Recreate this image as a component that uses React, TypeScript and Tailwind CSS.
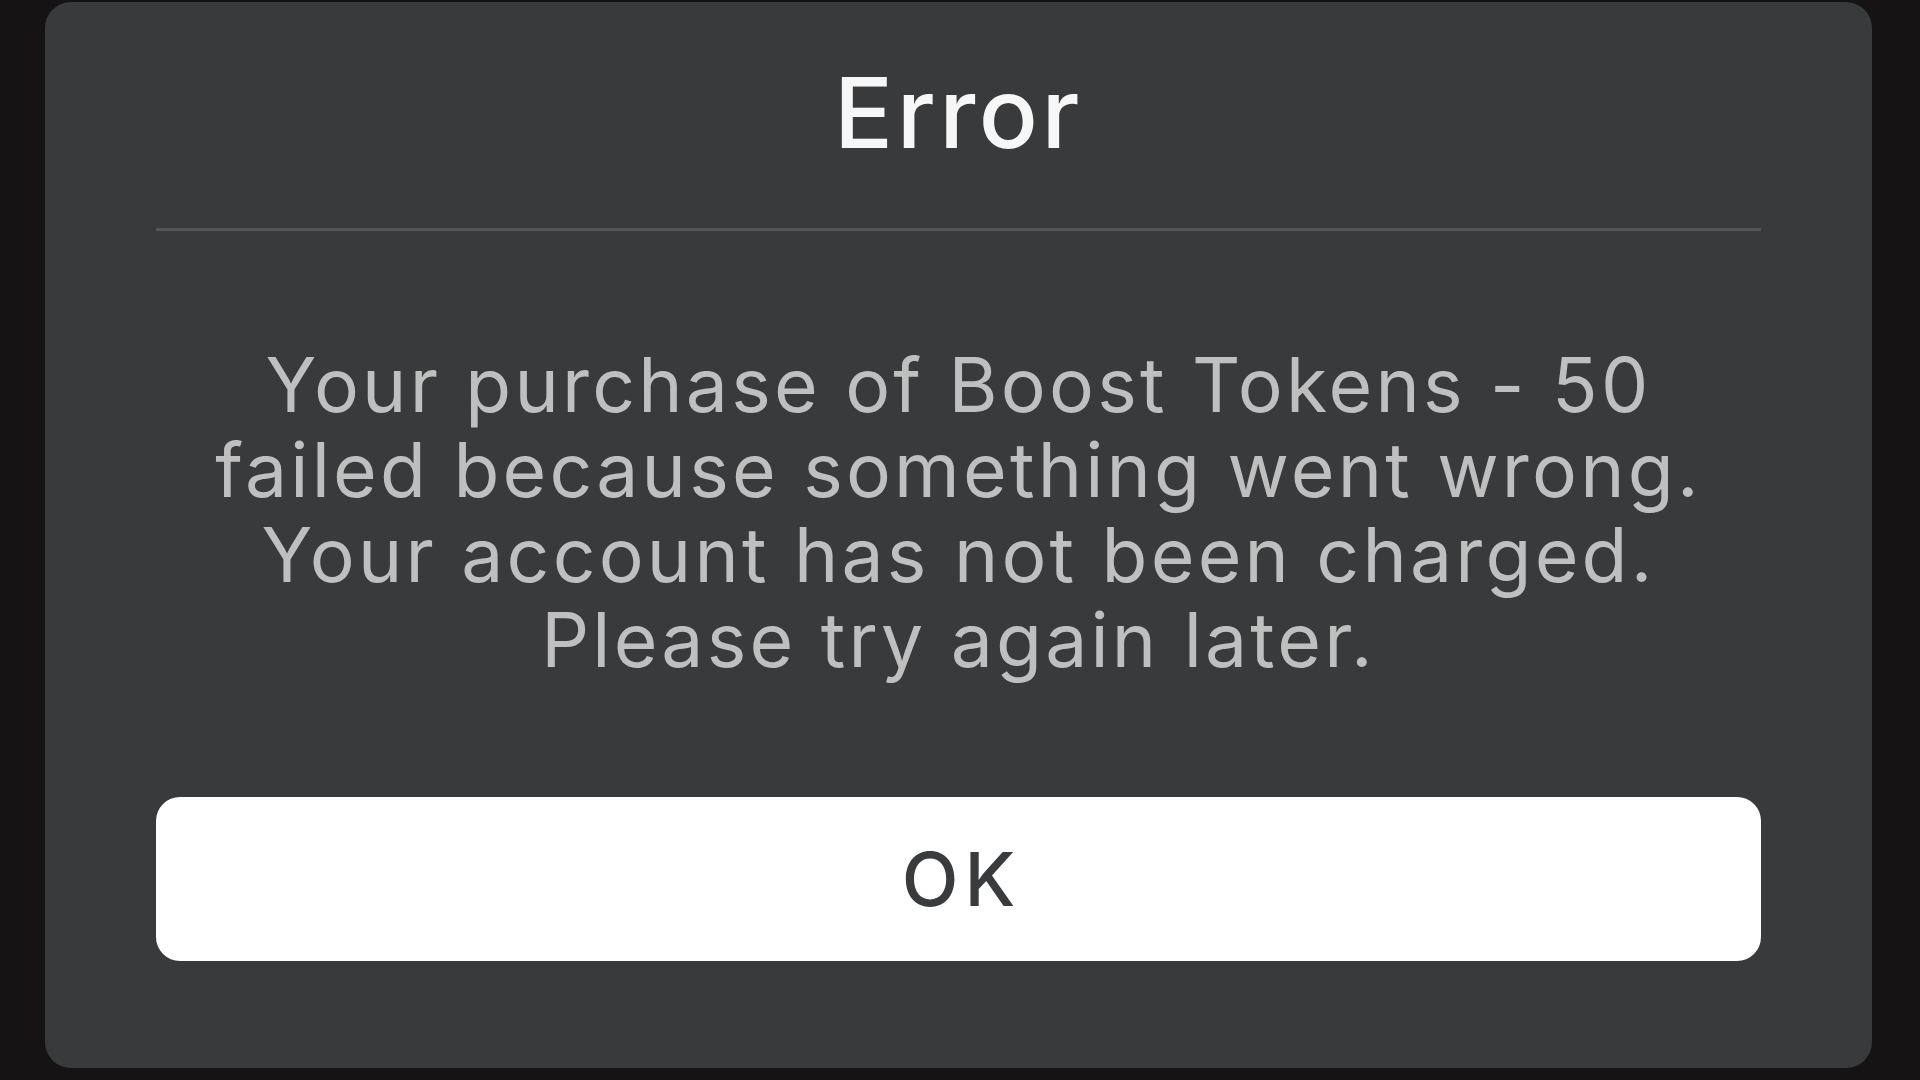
export default function App() {
  return (
    <div className="w-[1920px] h-[1080px] bg-[#151313] pl-[45px] pr-[48px] pt-[2px] pb-[12px] font-['Inter',sans-serif]">
      <div className="h-full rounded-[26px] bg-[#393a3c] flex flex-col px-[111px]">
        <div className="h-[226px] flex items-center justify-center pb-[4px]">
          <h1 className="text-[98px] leading-none font-medium text-[#f7f7f7] tracking-[3.5px]">Error</h1>
        </div>
        <div className="h-[3px] bg-[#555659]" />
        <p className="mt-[111px] text-center text-[75px] leading-[85px] text-[#bfbfbf] tracking-[3.2px]">
          Your purchase of Boost Tokens - 50
          <br />
          failed because something went wrong.
          <br />
          Your account has not been charged.
          <br />
          Please try again later.
        </p>
        <button className="mt-auto mb-[107px] h-[164px] w-full rounded-[24px] bg-white text-[74px] font-medium text-[#393b3d] tracking-[6px] pl-[6px]">
          OK
        </button>
      </div>
    </div>
  );
}
